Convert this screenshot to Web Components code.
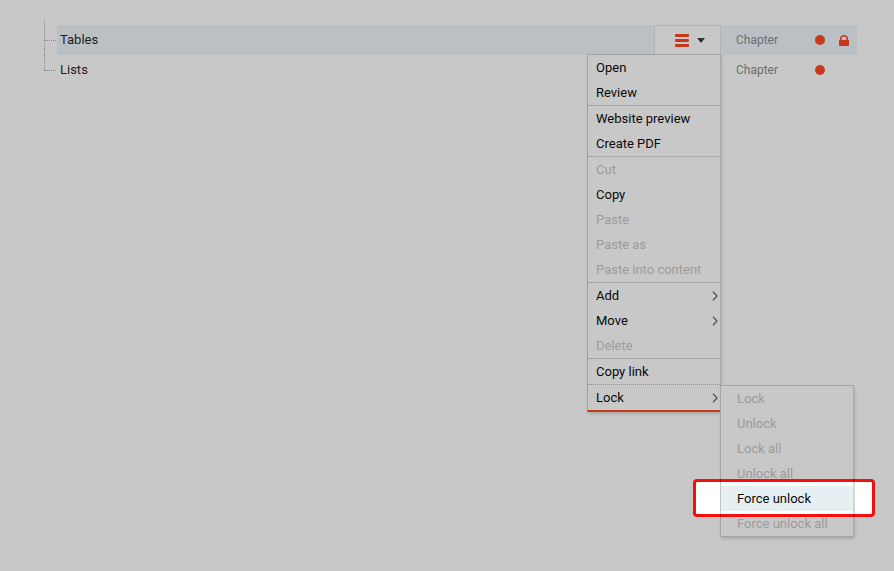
<!DOCTYPE html>
<html>
<head>
<meta charset="utf-8">
<title>Tree</title>
<style>
  html, body { margin: 0; height: 100%; background: #c8c8c8; }
  body { font: 13px Roboto, sans-serif; overflow: hidden; }
  doc-tree { margin: 25px 37px 0 44px; }
</style>
</head>
<body>
<doc-tree>
  <tree-row label="Tables" type="Chapter" selected locked first>
    <row-actions></row-actions>
  </tree-row>
  <tree-row label="Lists" type="Chapter" last></tree-row>
</doc-tree>

<context-menu style="left:587px;top:54px" accent>
  <menu-item>Open</menu-item>
  <menu-item>Review</menu-item>
  <menu-item separator>Website preview</menu-item>
  <menu-item>Create PDF</menu-item>
  <menu-item separator disabled>Cut</menu-item>
  <menu-item>Copy</menu-item>
  <menu-item disabled>Paste</menu-item>
  <menu-item disabled>Paste as</menu-item>
  <menu-item disabled>Paste into content</menu-item>
  <menu-item separator submenu>Add</menu-item>
  <menu-item submenu>Move</menu-item>
  <menu-item disabled>Delete</menu-item>
  <menu-item separator>Copy link</menu-item>
  <menu-item separator submenu>Lock</menu-item>
</context-menu>

<context-menu style="left:720px;top:385px;--item-pad:16px">
  <menu-item disabled>Lock</menu-item>
  <menu-item disabled>Unlock</menu-item>
  <menu-item disabled>Lock all</menu-item>
  <menu-item disabled>Unlock all</menu-item>
  <focus-callout><menu-item hover>Force unlock</menu-item></focus-callout>
  <menu-item disabled>Force unlock all</menu-item>
</context-menu>

<script>
  const define = (name, css, html, setup) => {
    customElements.define(name, class extends HTMLElement {
      constructor() {
        super();
        this.attachShadow({ mode: 'open' }).innerHTML = `<style>${css}</style>${html}`;
      }
      connectedCallback() {
        if (setup) setup(this);
      }
    });
  };

  define('doc-tree', ':host { display: block; }', '<slot></slot>');

  define('tree-row', `
    :host { display: flex; height: 30px; position: relative; color: #1e1e1e; }
    .guide { width: 13px; flex: none; position: relative; }
    .guide::before { content: ''; position: absolute; left: 0; top: -5px; bottom: 0; border-left: 1px dotted #868686; }
    :host([last]) .guide::before { top: 0; bottom: 15px; }
    .guide::after { content: ''; position: absolute; left: 0; right: 1px; top: 15px; border-top: 1px dotted #868686; }
    .body { flex: 1; display: flex; align-items: center; }
    :host([selected]) .body { background: #bac0c3; }
    .label { flex: 1; padding: 0 0 2px 3px; }
    .type { box-sizing: border-box; width: 94px; padding-left: 15px; color: #6e6e6e; font-size: 12px; }
    .meta { width: 136px; display: flex; align-items: center; align-self: stretch; }
    .dot { width: 10px; height: 10px; border-radius: 50%; background: #c7391a; }
    .lock { margin-left: 14px; display: none; }
    :host([locked]) .lock { display: block; }
  `, `
    <div class="guide"></div>
    <div class="body">
      <span class="label"></span>
      <slot></slot>
      <div class="meta">
        <span class="type"></span>
        <span class="dot"></span>
        <svg class="lock" width="10" height="11" viewBox="0 0 10 11">
          <path fill="#c7391a" d="M0 5h1V3.200C1 1.400 2.800 0 5 0s4 1.400 4 3.200V5h1v5.200c0 .4-.3.800-.7.800H.7c-.4 0-.7-.4-.7-.8zM2.600 5h4.800V3.300C7.400 2.200 6.300 1.500 5 1.500s-2.400.7-2.400 1.800z"/>
        </svg>
      </div>
    </div>
  `, (el) => {
    const root = el.shadowRoot;
    root.querySelector('.label').textContent = el.getAttribute('label');
    root.querySelector('.type').textContent = el.getAttribute('type');
  });

  define('row-actions', `
    :host { display: flex; align-items: center; justify-content: flex-end; box-sizing: border-box; width: 67px; height: 30px; gap: 8px; padding-right: 15px; border: 1px solid #b2b2b2; border-bottom-color: #a8a8a8; background: #c8c8c8; }
    svg { display: block; }
  `, `
    <svg width="14" height="13" viewBox="0 0 14 13">
      <g fill="#c7391a"><rect width="14" height="3" rx="1"/><rect y="5" width="14" height="3" rx="1"/><rect y="10" width="14" height="3" rx="1"/></g>
    </svg>
    <svg width="8" height="5" viewBox="0 0 8 5"><path fill="#2c3238" d="M0 0h8L4 5z"/></svg>
  `);

  define('context-menu', `
    :host { position: absolute; display: block; box-sizing: border-box; width: 134px; background: #c8c8c8; border: 1px solid #a4a4a4; border-right-color: #a8a8a8; box-shadow: 1px 2px 3px rgba(0,0,0,.14); }
    :host([accent]) { border-bottom: 2px solid #c7391a; }
  `, '<slot></slot>');

  define('menu-item', `
    :host { display: block; box-sizing: border-box; height: 25px; line-height: 25px; padding-left: var(--item-pad, 8px); position: relative; color: #0a0a0a; white-space: nowrap; }
    :host([separator]) { height: 26px; border-top: 1px dotted #8e8e8e; }
    :host([disabled]) { color: #9b9b9b; }
    :host([hover]) { background: #e6f0f3; }
    svg { display: none; position: absolute; right: 2px; top: 8px; }
    :host([submenu]) svg { display: block; }
  `, `
    <slot></slot>
    <svg width="6" height="10" viewBox="0 0 6 10"><path fill="none" stroke="#555" stroke-width="1.300" d="M1 .8 5 5 1 9.200"/></svg>
  `);

  define('focus-callout', `
    :host { display: block; position: relative; }
    :host::before { content: ''; position: absolute; left: -28px; right: -22px; top: -7px; bottom: -6px; background: #fff; border: 3px solid #f60d0d; border-radius: 4px; }
    /* the menu's edge and shadow still show through the white frame */
    :host::after { content: ''; position: absolute; left: -1px; right: -2px; top: -7px; bottom: -6px; border-left: 1px solid rgba(0,0,0,.22); border-right: 2px solid rgba(0,0,0,.16); pointer-events: none; }
  `, '<slot></slot>');
</script>
</body>
</html>
